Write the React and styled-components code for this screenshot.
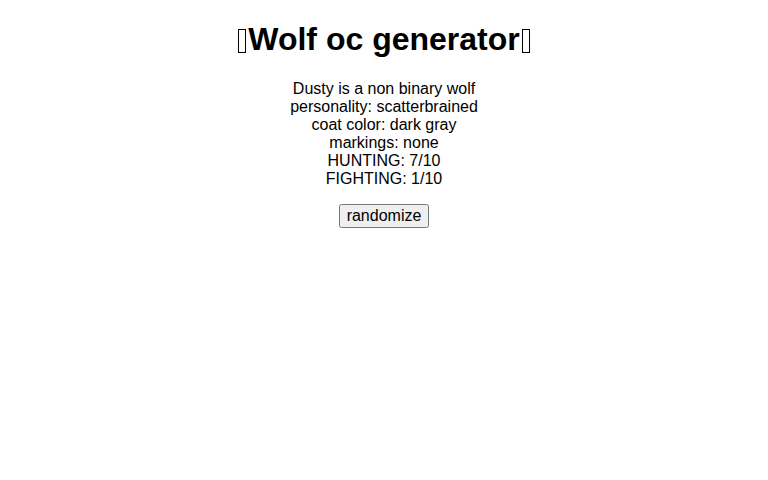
import React, { useState } from 'react';
import styled, { createGlobalStyle } from 'styled-components';

const GlobalStyle = createGlobalStyle`
    body {
        margin: 0 8px;
        font-family: "Liberation Sans", Arial, sans-serif;
        background: #ffffff;
        color: #000000;
    }
`;

const Page = styled.div`
    text-align: center;
`;

const Title = styled.h1`
    font-size: 32px;
    font-weight: 700;
    line-height: 37px;
    margin: 21.44px 0;
    font-family: "Liberation Sans", sans-serif;
`;

// the emoji shows up as a missing-glyph box in the screenshot
const Tofu = styled.span`
    display: inline-block;
    box-sizing: border-box;
    width: 8px;
    height: 24px;
    margin: 0 2px;
    border: 1.5px solid #000;
    vertical-align: -3px;
`;

const Details = styled.div`
    margin: 16px 0;
    font-size: 16px;
    line-height: 18px;
`;

const Line = styled.div``;

const RandomButton = styled.button`
    font-family: "Liberation Sans", Arial, sans-serif;
    font-size: 16px;
`;

export default function App() {
    const [wolf] = useState({
        name: 'Dusty',
        gender: 'non binary',
        personality: 'scatterbrained',
        coat: 'dark gray',
        markings: 'none',
        hunting: 7,
        fighting: 1,
    });

    return (
        <>
            <GlobalStyle />
            <Page>
                <Title>
                    <Tofu aria-label="wolf" />Wolf oc generator<Tofu aria-label="wolf" />
                </Title>
                <Details>
                    <Line>{wolf.name} is a {wolf.gender} wolf</Line>
                    <Line>personality: {wolf.personality}</Line>
                    <Line>coat color: {wolf.coat}</Line>
                    <Line>markings: {wolf.markings}</Line>
                    <Line>HUNTING: {wolf.hunting}/10</Line>
                    <Line>FIGHTING: {wolf.fighting}/10</Line>
                </Details>
                <RandomButton>randomize</RandomButton>
            </Page>
        </>
    );
}
